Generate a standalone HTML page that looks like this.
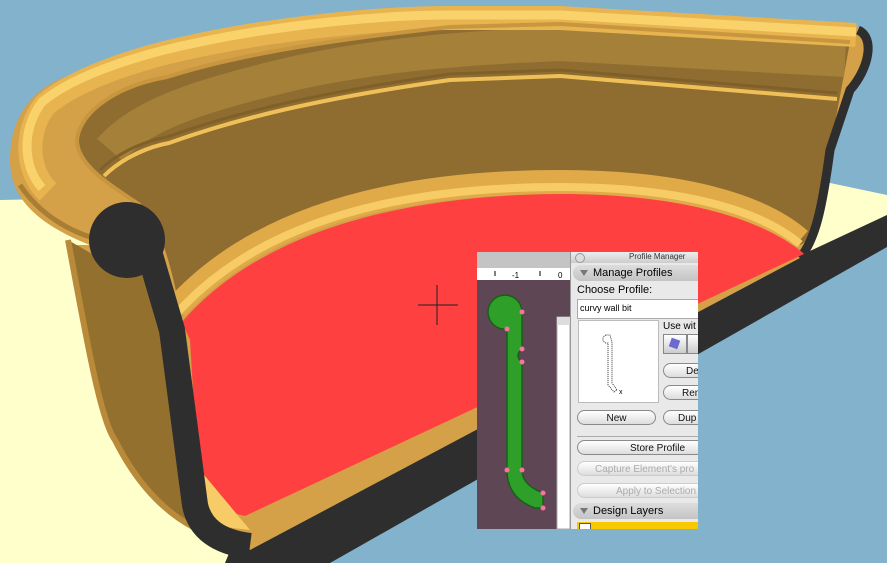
<!DOCTYPE html>
<html><head><meta charset="utf-8"><style>
html,body{margin:0;padding:0;width:887px;height:563px;overflow:hidden;background:#82b2cc}
svg{position:absolute;left:0;top:0}
.pm{position:absolute;left:570px;top:252px;width:127px;height:277px;background:#e9e9e9;font-family:"Liberation Sans",sans-serif;overflow:hidden;border-left:1px solid #999}
.t{position:absolute;white-space:nowrap}
.btn{position:absolute;height:15px;border:1px solid #8a8a8a;border-radius:8px;background:linear-gradient(#fff,#ddd);font-size:10px;text-align:center;line-height:15px;color:#111;box-sizing:border-box}
.hdr{position:absolute;left:2px;width:130px;height:16px;border-radius:8px 0 0 8px;background:linear-gradient(#ddd,#c4c4c4);font-size:11px;line-height:16px;padding-left:20px;box-sizing:border-box}
.hdr:before{content:"";position:absolute;left:7px;top:5px;border:4px solid transparent;border-top:6px solid #777}
</style></head><body>
<svg width="887" height="563" viewBox="0 0 887 563">
<polygon points="0,200 830,183 887,195 887,215 225,563 0,563" fill="#ffffcc"/>
<polygon points="887,215 887,247 330,563 225,563 245,515" fill="#2e2e2e"/>
<!-- bowl silhouette -->
<path d="M90,245 C40,225 10,200 10,160 C10,110 40,85 70,75 C150,45 300,15 450,10 L560,12 L858,28 C875,35 872,62 858,80 L830,150 C822,210 815,240 800,258 L250,550 L190,528 C150,500 110,440 70,245 Z" fill="#d4a048"/>
<!-- outer wall left -->
<path d="M68,240 C85,330 100,420 115,440 C140,490 170,515 195,528 L160,270 L120,270 Z" fill="#94702f"/>
<path d="M68,240 C85,330 100,420 115,440 C140,490 170,515 195,528" fill="none" stroke="#b88a3a" stroke-width="6"/>
<path d="M20,185 C40,215 70,232 100,240" fill="none" stroke="#a87e34" stroke-width="5"/>
<!-- inner wall -->
<path d="M140,205 C110,185 77,165 77,140 C80,110 120,85 167,77 C220,60 300,43 450,27 L560,24 L850,42 L830,150 C822,205 815,240 800,245 C760,205 680,175 560,173 C400,173 260,205 180,310 C170,260 160,225 140,205 Z" fill="#8f6d31"/>
<path d="M110,150 C140,115 200,95 300,72 C380,55 460,48 560,44 L845,60" fill="none" stroke="#a48038" stroke-width="34"/>
<path d="M100,170 C120,150 150,140 167,137 C220,118 300,95 450,74 L560,70 L837,93" fill="none" stroke="#7e6028" stroke-width="3"/>
<path d="M104,176 C124,156 152,146 169,143 C222,124 300,101 450,80 L560,76 L837,99" fill="none" stroke="#f0c058" stroke-width="4"/>
<!-- rim highlights -->
<path d="M48,192 C25,170 25,130 45,105 C80,75 150,55 200,45 C280,28 380,18 450,18 L560,18 L856,35" fill="none" stroke="#e8b450" stroke-width="24"/>
<path d="M42,188 C22,166 22,128 42,102 C78,72 150,52 200,42 C280,25 380,15 450,15 L560,15 L856,32" fill="none" stroke="#f9d26c" stroke-width="9"/>
<path d="M140,205 C110,185 77,165 77,140 C80,110 120,85 167,77 C220,60 300,43 450,27 L560,24 L850,42" fill="none" stroke="#c8963e" stroke-width="4"/>
<path d="M858,30 C876,38 868,70 850,90 L830,150 C822,210 815,240 800,258" fill="none" stroke="#2e2e2e" stroke-width="9"/>
<!-- floor lip -->
<path d="M176,308 C260,215 400,182 560,182 C680,182 760,205 800,240" fill="none" stroke="#e0aa48" stroke-width="24"/>
<path d="M178,312 C262,220 400,187 560,187 C680,187 760,210 800,244" fill="none" stroke="#f7cc66" stroke-width="8"/>
<!-- red floor -->
<path d="M182,322 C260,232 400,195 560,194 C680,194 760,218 802,252 L804,254 L245,516 L200,505 L190,340 Z" fill="#ff4040"/>
<path d="M200,470 L208,525 L250,530 Z" fill="#f7cc66"/>
<!-- profile -->
<circle cx="127" cy="240" r="38" fill="#2e2e2e"/>
<path d="M150,255 L172,330 L195,505 Q202,540 250,546" fill="none" stroke="#2e2e2e" stroke-width="26" stroke-linejoin="round"/>
<line x1="418" y1="305" x2="458" y2="305" stroke="#222" stroke-width="1"/>
<line x1="437" y1="285" x2="437" y2="325" stroke="#222" stroke-width="1"/>
<!-- left panel -->
<rect x="477" y="252" width="93" height="277" fill="#5e4654"/>
<rect x="477" y="252" width="93" height="16" fill="#c4c4c4"/>
<rect x="477" y="268" width="93" height="12" fill="#fff"/>
<g stroke="#000" stroke-width="1"><line x1="495" y1="271" x2="495" y2="276"/><line x1="540" y1="271" x2="540" y2="276"/></g>
<text x="512" y="278" font-size="8" font-family="Liberation Sans">-1</text>
<text x="558" y="278" font-size="8" font-family="Liberation Sans">0</text>
<rect x="557" y="317" width="13" height="212" fill="#fff" stroke="#aaa"/>
<rect x="557" y="317" width="13" height="8" fill="#ddd"/>
<path d="M522,312 A17,17 0 1 0 507,329 L507,470 Q507,498 535,508 L543,508 L543,493 Q522,485 522,470 L522,362 Q514,356 522,349 Z" fill="#2ea02a" stroke="#186018" stroke-width="1.5"/>
<g fill="#ff6fa0"><circle cx="522" cy="312" r="2.5"/><circle cx="507" cy="329" r="2.5"/><circle cx="522" cy="349" r="2.5"/><circle cx="522" cy="362" r="2.5"/><circle cx="507" cy="470" r="2.5"/><circle cx="522" cy="470" r="2.5"/><circle cx="543" cy="493" r="2.5"/><circle cx="543" cy="508" r="2.5"/></g>
</svg>
<div class="pm">
<div class="t" style="left:0;top:0;width:127px;height:11px;background:linear-gradient(#eee,#ccc)"></div>
<div class="t" style="left:4px;top:1px;width:8px;height:8px;border-radius:50%;border:1px solid #999;background:#ddd"></div>
<div class="t" style="left:58px;top:0;font-size:8px;color:#333">Profile Manager</div>
<div class="hdr" style="top:13px">Manage Profiles</div>
<div class="t" style="left:6px;top:32px;font-size:11px">Choose Profile:</div>
<div class="t" style="left:6px;top:47px;width:130px;height:18px;background:#fff;border:1px solid #aaa;font-size:9px;line-height:16px;padding-left:2px">curvy wall bit</div>
<div class="t" style="left:7px;top:68px;width:79px;height:81px;background:#fff;border:1px solid #bbb"></div>
<svg style="left:27px;top:78px;position:absolute" width="40" height="70"><path d="M8,5 a4,4 0 1 0 2,8 L10,55 L16,62 L19,60 L14,53 L14,12 L12,5 Z" fill="none" stroke="#000" stroke-width="0.8" stroke-dasharray="1,1"/><text x="21" y="64" font-size="7" font-family="Liberation Sans">x</text></svg>
<div class="t" style="left:92px;top:69px;font-size:10px">Use wit</div>
<div class="t" style="left:92px;top:82px;width:22px;height:18px;border:1px solid #888;background:linear-gradient(#fff,#ccc)"><div style="margin:4px 6px;width:9px;height:9px;background:#6a6ad0;transform:rotate(20deg)"></div></div>
<div class="t" style="left:116px;top:82px;width:20px;height:18px;border:1px solid #888;background:linear-gradient(#fff,#ccc)"></div>
<div class="btn" style="left:92px;top:111px;width:50px;text-align:left;padding-left:22px">De</div>
<div class="btn" style="left:92px;top:133px;width:50px;text-align:left;padding-left:18px">Ren</div>
<div class="btn" style="left:6px;top:158px;width:79px">New</div>
<div class="btn" style="left:92px;top:158px;width:50px;text-align:left;padding-left:14px">Dup</div>
<div class="t" style="left:6px;top:184px;width:130px;height:1px;background:#aaa"></div>
<div class="btn" style="left:6px;top:188px;width:150px;text-align:left;padding-left:52px">Store Profile</div>
<div class="btn" style="left:6px;top:209px;width:150px;text-align:left;padding-left:17px;color:#aaa;border-color:#ccc">Capture Element's pro</div>
<div class="btn" style="left:6px;top:231px;width:150px;text-align:left;padding-left:38px;color:#aaa;border-color:#ccc">Apply to Selection</div>
<div class="hdr" style="top:251px">Design Layers</div>
<div class="t" style="left:6px;top:270px;width:130px;height:10px;background:#f8c800"></div>
<div class="t" style="left:8px;top:271px;width:10px;height:8px;background:#fff;border:1px solid #555"></div>
</div>
</body></html>
